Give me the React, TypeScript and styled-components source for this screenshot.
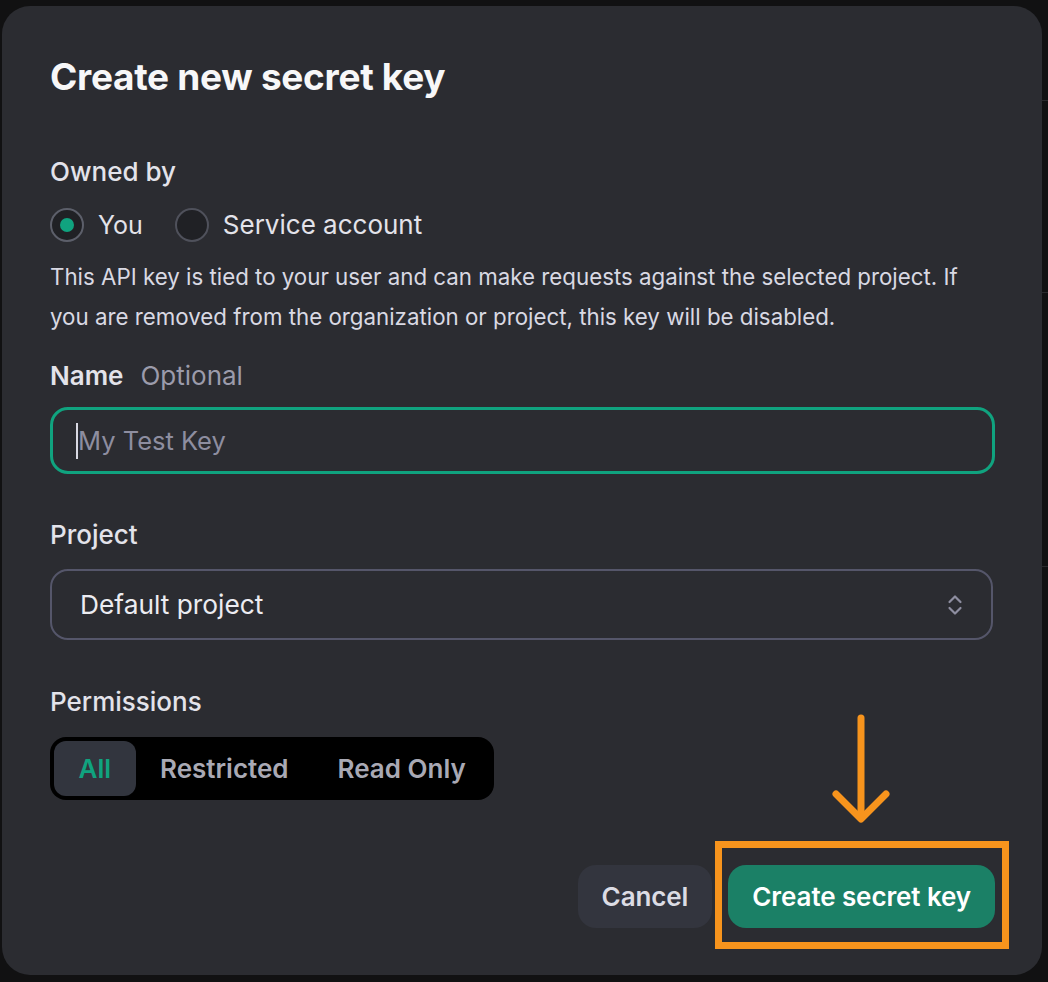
import React from "react";
import styled, { createGlobalStyle } from "styled-components";

const Global = createGlobalStyle`
  html, body { margin: 0; padding: 0; background: #111112; }
  body { font-family: Inter, "Noto Sans", sans-serif; -webkit-font-smoothing: antialiased; }
  * { box-sizing: border-box; }
`;

const Backdrop = styled.div`
  width: 1048px;
  height: 982px;
  padding: 6px 6px 7px 2px;
  background: #111112;
  position: relative;
  overflow: hidden;
`;

const EdgeLine = styled.div<{ $top: number }>`
  position: absolute;
  right: 0;
  top: ${(p) => p.$top}px;
  width: 8px;
  height: 1px;
  background: #2a2a2d;
`;

const Modal = styled.div`
  position: relative;
  width: 1040px;
  height: 969px;
  background: #2b2c31;
  border-radius: 28px;
  padding: 49px 47px 0 48px;
  display: flex;
  flex-direction: column;
  color: #ececf1;
  & > * { flex-shrink: 0; }
`;

const Title = styled.h1`
  margin: 0;
  font-size: 37px;
  line-height: 44px;
  font-weight: 700;
  letter-spacing: -0.3px;
  color: #f7f7f8;
`;

const Label = styled.div<{ $mt: number; $weight?: number }>`
  margin-top: ${(p) => p.$mt}px;
  font-size: 26px;
  line-height: 30px;
  font-weight: ${(p) => p.$weight ?? 500};
  color: #e3e3ea;
  display: flex;
  gap: 17px;
`;

const Optional = styled.span`
  font-weight: 400;
  color: #9b9bab;
`;

const RadioRow = styled.div`
  margin-top: 21px;
  display: flex;
  align-items: center;
  height: 34px;
  gap: 32px;
`;

const RadioItem = styled.label<{ $size: number }>`
  display: flex;
  align-items: center;
  gap: 14px;
  font-size: ${(p) => p.$size}px;
  line-height: 34px;
  color: #e3e3ea;
`;

const RadioCircle = styled.span<{ $checked?: boolean }>`
  width: 34px;
  height: 34px;
  border-radius: 50%;
  border: 2px solid ${(p) => (p.$checked ? "#5c5f6a" : "#4f515b")};
  background: #202125;
  display: flex;
  align-items: center;
  justify-content: center;
  &::after {
    content: "";
    display: ${(p) => (p.$checked ? "block" : "none")};
    width: 14px;
    height: 14px;
    border-radius: 50%;
    background: #10a37f;
  }
`;

const Description = styled.p`
  margin: 15px 0 0;
  font-size: 22.3px;
  line-height: 40px;
  color: #d9d9e3;
`;

const InputBox = styled.div`
  margin-top: 16px;
  height: 67px;
  border: 3px solid #10a37f;
  border-radius: 18px;
  display: flex;
  align-items: center;
  padding-left: 23px;
  font-size: 25.5px;
  color: #8e8ea0;
`;

const Caret = styled.span`
  width: 2px;
  height: 36px;
  background: #d9d9e3;
`;

const SelectBox = styled.div`
  margin-top: 19px;
  height: 71px;
  width: 943px;
  border: 2px solid #55566a;
  border-radius: 18px;
  display: flex;
  align-items: center;
  justify-content: space-between;
  padding: 0 28px 0 28px;
  font-size: 26.3px;
  color: #ececf1;
`;

const Segmented = styled.div`
  margin-top: 20px;
  align-self: flex-start;
  display: flex;
  padding: 4px;
  background: #000;
  border-radius: 16px;
  height: 63px;
`;

const Tab = styled.div<{ $active?: boolean }>`
  padding: 0 24.5px;
  display: flex;
  align-items: center;
  border-radius: 12px;
  font-size: 26px;
  font-weight: 600;
  color: ${(p) => (p.$active ? "#10a37f" : "#a9a9b4")};
  background: ${(p) => (p.$active ? "#32353e" : "transparent")};
`;

const Footer = styled.div`
  margin-top: 65px;
  display: flex;
  justify-content: flex-end;
  gap: 16px;
`;

const Button = styled.button<{ $primary?: boolean }>`
  height: 63px;
  border: none;
  border-radius: 18px;
  padding: 0 24px;
  font-family: inherit;
  font-size: 26px;
  font-weight: 600;
  letter-spacing: -0.1px;
  color: ${(p) => (p.$primary ? "#ffffff" : "#dcdce4")};
  background: ${(p) => (p.$primary ? "#1b8066" : "#33353e")};
`;

const Highlight = styled.div`
  position: absolute;
  left: 713px;
  top: 835px;
  width: 294px;
  height: 108px;
  border: 7px solid #f7941d;
  pointer-events: none;
`;

const ArrowSvg = styled.svg`
  position: absolute;
  left: 824px;
  top: 702px;
  width: 70px;
  height: 120px;
  overflow: visible;
`;

const ChevronUpDown = () => (
  <svg width="16" height="22" viewBox="0 0 16 22" fill="none">
    <path d="M2.5 8 L8 2.5 L13.5 8" stroke="#8e8ea0" strokeWidth="2.2" strokeLinecap="round" strokeLinejoin="round" />
    <path d="M2.5 14 L8 19.5 L13.5 14" stroke="#8e8ea0" strokeWidth="2.2" strokeLinecap="round" strokeLinejoin="round" />
  </svg>
);

export default function App() {
  return (
    <>
      <Global />
      <Backdrop>
        <EdgeLine $top={100} />
        <EdgeLine $top={292} />
        <EdgeLine $top={566} />
        <Modal>
          <Title>Create new secret key</Title>
          <Label $mt={58}>Owned by</Label>
          <RadioRow>
            <RadioItem $size={25}>
              <RadioCircle $checked />
              You
            </RadioItem>
            <RadioItem $size={26}>
              <RadioCircle />
              Service account
            </RadioItem>
          </RadioRow>
          <Description>
            This API key is tied to your user and can make requests against the selected project. If
            you are removed from the organization or project, this key will be disabled.
          </Description>
          <Label $mt={24} $weight={600}>
            Name <Optional>Optional</Optional>
          </Label>
          <InputBox>
            <Caret />
            My Test Key
          </InputBox>
          <Label $mt={46}>Project</Label>
          <SelectBox>
            Default project
            <ChevronUpDown />
          </SelectBox>
          <Label $mt={47}>Permissions</Label>
          <Segmented>
            <Tab $active>All</Tab>
            <Tab>Restricted</Tab>
            <Tab>Read Only</Tab>
          </Segmented>
          <Footer>
            <Button>Cancel</Button>
            <Button $primary>Create secret key</Button>
          </Footer>
          <Highlight />
          <ArrowSvg viewBox="0 0 70 120" fill="none">
            <path d="M35 10 L35 110" stroke="#f7941d" strokeWidth="7" strokeLinecap="round" />
            <path d="M10 86 L35 111 L60 86" stroke="#f7941d" strokeWidth="7" strokeLinecap="round" strokeLinejoin="round" />
          </ArrowSvg>
        </Modal>
      </Backdrop>
    </>
  );
}
